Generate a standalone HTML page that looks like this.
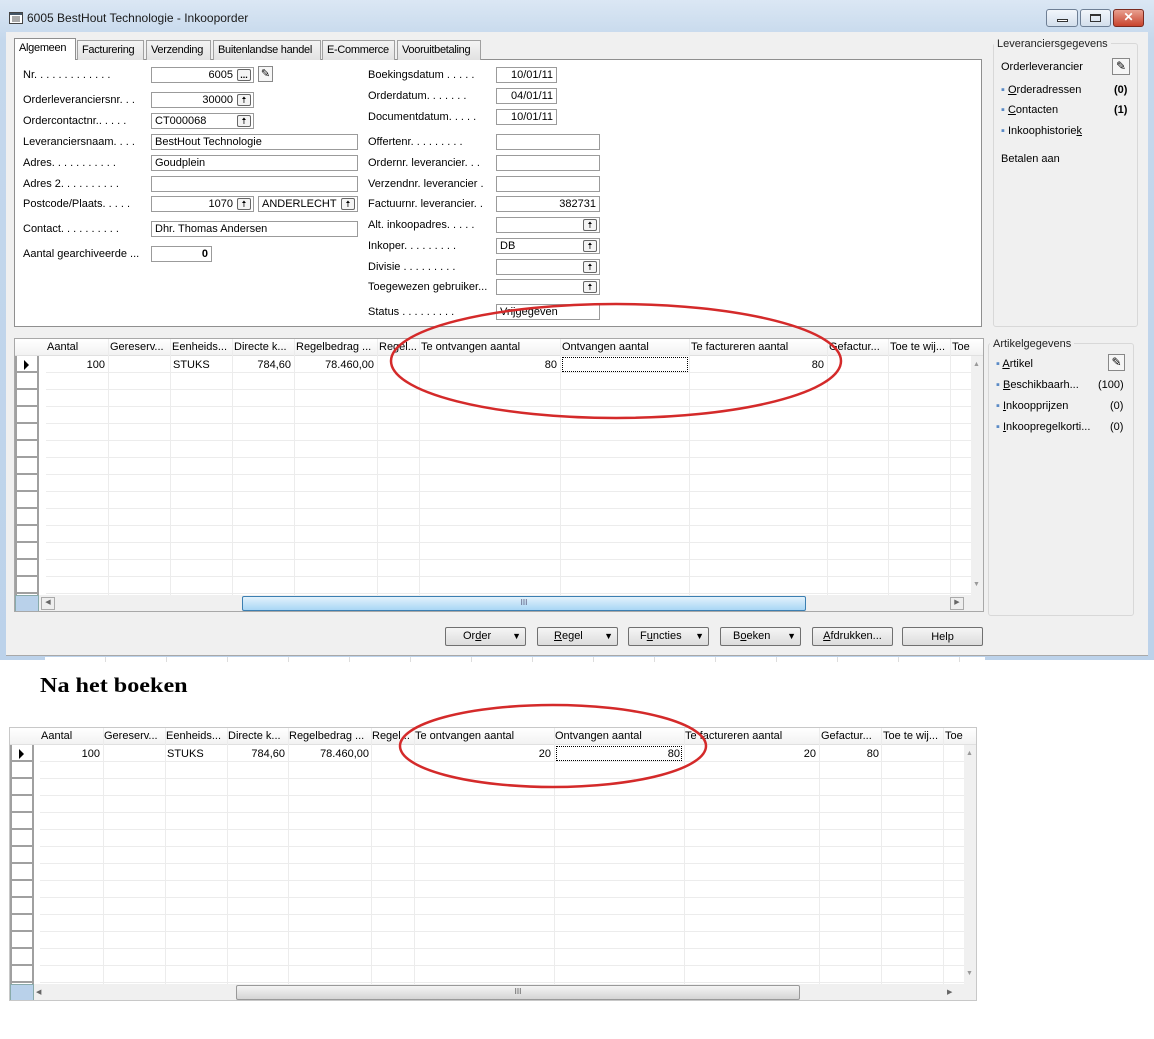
<!DOCTYPE html>
<html><head><meta charset="utf-8"><style>
*{box-sizing:border-box;margin:0;padding:0}
body{width:1154px;height:1039px;background:#fff;position:relative;overflow:hidden;font-family:"Liberation Sans",sans-serif;font-size:11px;color:#000}
.a{position:absolute}
.win{left:0;top:0;width:1154px;height:660px;background:linear-gradient(#dbe7f4,#c5d8ec 40px,#bcd2ea);}
.content{left:6px;top:32px;width:1142px;height:624px;background:#f0f0f0;border-bottom:1px solid #a8a8a8}
.title{left:27px;top:11px;font-size:12px;color:#1a1a1a}
.tb{top:9px;height:18px;border:1px solid #6e7f95;border-radius:3px;background:linear-gradient(#f2f6fb,#d3dfec)}
.panel{left:14px;top:59px;width:968px;height:268px;background:#fff;border:1px solid #8f8f8f}
.tab{top:40px;height:20px;border:1px solid #a0a0a0;border-bottom:none;background:linear-gradient(#f4f4f4,#e2e2e2);padding:3px 0 0 4px;font-size:11px;white-space:nowrap;overflow:hidden;letter-spacing:-0.3px}
.lbl{font-size:11px;white-space:nowrap}
.in{height:16px;border:1px solid #9b9b9b;background:#fff;padding:1px 3px;font-size:11px;white-space:nowrap;overflow:hidden}
.r{text-align:right}
.ab{position:absolute;top:1px;width:14px;height:12px;border:1px solid #666;border-radius:2px;background:#f4f4f4;font-size:9px;line-height:10px;text-align:center}
.grp{border:1px solid #d8d8d8;border-radius:3px}
.gl{background:#f0f0f0;padding:0 3px;font-size:11px;color:#222}
.btn{top:627px;height:19px;border:1px solid #707070;border-radius:2px;background:linear-gradient(#f5f5f5,#dcdcdc);font-size:11px;padding-top:2px}
.grid{border:1px solid #a8a8a8;background:#fff;overflow:hidden}
.hdr{left:0;top:0;right:0;height:17px;background:linear-gradient(#fff,#f2f2f2);border-bottom:1px solid #e0e0e0}
.hc{top:2px;font-size:11px;white-space:nowrap;overflow:hidden}
.vl{width:1px;background:#ececec}
.ind{background:repeating-linear-gradient(#fff 0 15px,#a0a0a0 15px 17px);border-right:2px solid #a0a0a0;border-left:2px solid #a0a0a0}
.rows{background:repeating-linear-gradient(#fff 0 16px,#ececec 16px 17px)}
.cell{font-size:11px;white-space:nowrap}
u{text-decoration:underline}
</style></head><body>

<div class="a win"></div>
<div class="a content"></div>
<svg class="a" style="left:9px;top:12px" width="14" height="12"><rect x=".5" y=".5" width="13" height="11" fill="#fff" stroke="#444"/><rect x="1" y="1" width="12" height="2" fill="#456"/><path d="M3 5h8M3 7h8M3 9h8" stroke="#555"/></svg>
<div class="a title">6005 BestHout Technologie - Inkooporder</div>
<div class="a tb" style="left:1046px;width:32px"><div class="a" style="left:10px;top:9px;width:11px;height:3px;border:1px solid #333;background:#fff"></div></div>
<div class="a tb" style="left:1080px;width:31px"><div class="a" style="left:9px;top:4px;width:11px;height:8px;border:1px solid #333;border-top-width:2px"></div></div>
<div class="a tb" style="left:1113px;width:31px;background:linear-gradient(#e8a090,#c8432d);border-color:#7a2a20;color:#fff;font-weight:bold;text-align:center;font-size:12px;line-height:15px">✕</div>

<!-- tabs -->
<div class="a panel"></div>
<div class="a tab" style="left:14px;width:62px;top:38px;height:22px;background:#fff;border-color:#8f8f8f">Algemeen</div>
<div class="a tab" style="left:77px;width:67px">Facturering</div>
<div class="a tab" style="left:146px;width:65px">Verzending</div>
<div class="a tab" style="left:213px;width:108px">Buitenlandse handel</div>
<div class="a tab" style="left:322px;width:73px">E-Commerce</div>
<div class="a tab" style="left:397px;width:84px">Vooruitbetaling</div>

<!-- left fields -->
<div class="a lbl" style="left:23px;top:69px">Nr. . . . . . . . . . . . .</div>
<div class="a in r" style="left:151px;top:67px;width:103px;padding-right:20px">6005<span class="ab" style="right:2px;font-weight:bold">...</span></div>
<div class="a" style="left:258px;top:66px;width:15px;height:16px;border:1px solid #888;background:#f6f6f6;font-size:11px;text-align:center">✎</div>
<div class="a lbl" style="left:23px;top:94px">Orderleveranciersnr. . .</div>
<div class="a in r" style="left:151px;top:92px;width:103px;padding-right:20px">30000<span class="ab" style="right:2px">🠅</span></div>
<div class="a lbl" style="left:23px;top:115px">Ordercontactnr.. . . . .</div>
<div class="a in" style="left:151px;top:113px;width:103px">CT000068<span class="ab" style="right:2px">🠅</span></div>
<div class="a lbl" style="left:23px;top:136px">Leveranciersnaam. . . .</div>
<div class="a in" style="left:151px;top:134px;width:207px">BestHout Technologie</div>
<div class="a lbl" style="left:23px;top:157px">Adres. . . . . . . . . . .</div>
<div class="a in" style="left:151px;top:155px;width:207px">Goudplein</div>
<div class="a lbl" style="left:23px;top:178px">Adres 2. . . . . . . . . .</div>
<div class="a in" style="left:151px;top:176px;width:207px"></div>
<div class="a lbl" style="left:23px;top:198px">Postcode/Plaats. . . . .</div>
<div class="a in r" style="left:151px;top:196px;width:103px;padding-right:20px">1070<span class="ab" style="right:2px">🠅</span></div>
<div class="a in" style="left:258px;top:196px;width:100px">ANDERLECHT<span class="ab" style="right:2px">🠅</span></div>
<div class="a lbl" style="left:23px;top:223px">Contact. . . . . . . . . .</div>
<div class="a in" style="left:151px;top:221px;width:207px">Dhr. Thomas Andersen</div>
<div class="a lbl" style="left:23px;top:248px">Aantal gearchiveerde ...</div>
<div class="a in r" style="left:151px;top:246px;width:61px;font-weight:bold">0</div>

<!-- right fields -->
<div class="a lbl" style="left:368px;top:69px">Boekingsdatum . . . . .</div>
<div class="a in r" style="left:496px;top:67px;width:61px">10/01/11</div>
<div class="a lbl" style="left:368px;top:90px">Orderdatum. . . . . . .</div>
<div class="a in r" style="left:496px;top:88px;width:61px">04/01/11</div>
<div class="a lbl" style="left:368px;top:111px">Documentdatum. . . . .</div>
<div class="a in r" style="left:496px;top:109px;width:61px">10/01/11</div>
<div class="a lbl" style="left:368px;top:136px">Offertenr. . . . . . . . .</div>
<div class="a in" style="left:496px;top:134px;width:104px"></div>
<div class="a lbl" style="left:368px;top:157px">Ordernr. leverancier. . .</div>
<div class="a in" style="left:496px;top:155px;width:104px"></div>
<div class="a lbl" style="left:368px;top:178px">Verzendnr. leverancier .</div>
<div class="a in" style="left:496px;top:176px;width:104px"></div>
<div class="a lbl" style="left:368px;top:198px">Factuurnr. leverancier. .</div>
<div class="a in r" style="left:496px;top:196px;width:104px">382731</div>
<div class="a lbl" style="left:368px;top:219px">Alt. inkoopadres. . . . .</div>
<div class="a in" style="left:496px;top:217px;width:104px"><span class="ab" style="right:2px">🠅</span></div>
<div class="a lbl" style="left:368px;top:240px">Inkoper. . . . . . . . .</div>
<div class="a in" style="left:496px;top:238px;width:104px">DB<span class="ab" style="right:2px">🠅</span></div>
<div class="a lbl" style="left:368px;top:261px">Divisie . . . . . . . . .</div>
<div class="a in" style="left:496px;top:259px;width:104px"><span class="ab" style="right:2px">🠅</span></div>
<div class="a lbl" style="left:368px;top:281px">Toegewezen gebruiker...</div>
<div class="a in" style="left:496px;top:279px;width:104px"><span class="ab" style="right:2px">🠅</span></div>
<div class="a lbl" style="left:368px;top:306px">Status . . . . . . . . .</div>
<div class="a in" style="left:496px;top:304px;width:104px">Vrijgegeven</div>

<!-- right side panels -->
<div class="a grp" style="left:993px;top:43px;width:145px;height:284px"></div>
<div class="a gl" style="left:994px;top:38px">Leveranciersgegevens</div>
<div class="a lbl" style="left:1001px;top:61px">Orderleverancier</div>
<div class="a" style="left:1112px;top:58px;width:18px;height:17px;border:1px solid #888;background:#f6f6f6;text-align:center;font-size:12px">✎</div>
<div class="a lbl" style="left:1001px;top:84px"><span style="color:#5a8ac6">▪</span> <u>O</u>rderadressen</div><div class="a lbl" style="left:1114px;top:84px;font-weight:bold">(0)</div>
<div class="a lbl" style="left:1001px;top:104px"><span style="color:#5a8ac6">▪</span> <u>C</u>ontacten</div><div class="a lbl" style="left:1114px;top:104px;font-weight:bold">(1)</div>
<div class="a lbl" style="left:1001px;top:125px"><span style="color:#5a8ac6">▪</span> Inkoophistorie<u>k</u></div>
<div class="a lbl" style="left:1001px;top:153px">Betalen aan</div>

<div class="a grp" style="left:988px;top:343px;width:146px;height:273px"></div>
<div class="a gl" style="left:990px;top:338px">Artikelgegevens</div>
<div class="a lbl" style="left:996px;top:358px"><span style="color:#5a8ac6">▪</span> <u>A</u>rtikel</div>
<div class="a" style="left:1108px;top:354px;width:17px;height:17px;border:1px solid #888;background:#f6f6f6;text-align:center;font-size:12px">✎</div>
<div class="a lbl" style="left:996px;top:379px"><span style="color:#5a8ac6">▪</span> <u>B</u>eschikbaarh...</div><div class="a lbl" style="left:1098px;top:379px">(100)</div>
<div class="a lbl" style="left:996px;top:400px"><span style="color:#5a8ac6">▪</span> <u>I</u>nkoopprijzen</div><div class="a lbl" style="left:1110px;top:400px">(0)</div>
<div class="a lbl" style="left:996px;top:421px"><span style="color:#5a8ac6">▪</span> <u>I</u>nkoopregelkorti...</div><div class="a lbl" style="left:1110px;top:421px">(0)</div>

<!-- GRID 1 -->
<div class="a grid" style="left:14px;top:338px;width:970px;height:274px">
 <div class="a hdr"></div>
 <div class="a ind" style="left:0;top:17px;width:24px;height:239px"></div>
 <div class="a rows" style="left:31px;top:17px;width:925px;height:239px"></div>
 <div class="a vl" style="left:93px;top:0;height:256px"></div>
 <div class="a vl" style="left:155px;top:0;height:256px"></div>
 <div class="a vl" style="left:217px;top:0;height:256px"></div>
 <div class="a vl" style="left:279px;top:0;height:256px"></div>
 <div class="a vl" style="left:362px;top:0;height:256px"></div>
 <div class="a vl" style="left:404px;top:0;height:256px"></div>
 <div class="a vl" style="left:545px;top:0;height:256px"></div>
 <div class="a vl" style="left:674px;top:0;height:256px"></div>
 <div class="a vl" style="left:812px;top:0;height:256px"></div>
 <div class="a vl" style="left:873px;top:0;height:256px"></div>
 <div class="a vl" style="left:935px;top:0;height:256px"></div>
 <div class="a hc" style="left:32px">Aantal</div>
 <div class="a hc" style="left:95px;width:59px">Gereserv...</div>
 <div class="a hc" style="left:157px;width:59px">Eenheids...</div>
 <div class="a hc" style="left:219px;width:59px">Directe k...</div>
 <div class="a hc" style="left:281px;width:80px">Regelbedrag ...</div>
 <div class="a hc" style="left:364px;width:40px">Regel...</div>
 <div class="a hc" style="left:406px">Te ontvangen aantal</div>
 <div class="a hc" style="left:547px">Ontvangen aantal</div>
 <div class="a hc" style="left:676px">Te factureren aantal</div>
 <div class="a hc" style="left:814px;width:58px">Gefactur...</div>
 <div class="a hc" style="left:875px;width:59px">Toe te wij...</div>
 <div class="a hc" style="left:937px;width:18px">Toe</div>
 <div class="a" style="left:9px;top:21px;width:0;height:0;border-left:5px solid #000;border-top:5px solid transparent;border-bottom:5px solid transparent"></div>
 <div class="a cell r" style="left:31px;top:20px;width:59px">100</div>
 <div class="a cell" style="left:158px;top:20px">STUKS</div>
 <div class="a cell r" style="left:217px;top:20px;width:59px">784,60</div>
 <div class="a cell r" style="left:279px;top:20px;width:80px">78.460,00</div>
 <div class="a cell r" style="left:404px;top:20px;width:138px">80</div>
 <div class="a" style="left:547px;top:18px;width:126px;height:15px;border:1px dotted #000"></div>
 <div class="a cell r" style="left:674px;top:20px;width:135px">80</div>
 <div class="a" style="left:956px;top:17px;width:13px;height:239px;background:#f0f0f0"></div>
 <div class="a" style="left:958px;top:22px;font-size:7px;color:#999">▲</div>
 <div class="a" style="left:958px;top:242px;font-size:7px;color:#999">▼</div>
 <div class="a" style="left:0;top:256px;width:24px;height:17px;background:#b9d1ea;border:1px solid #8aa"></div>
 <div class="a" style="left:24px;top:256px;width:946px;height:17px;background:#f0f0f0"></div>
 <div class="a" style="left:26px;top:258px;width:14px;height:13px;border:1px solid #aaa;background:#eee;font-size:7px;color:#666;text-align:center">◀</div>
 <div class="a" style="left:227px;top:257px;width:564px;height:15px;border:1px solid #3c7fb1;border-radius:2px;background:linear-gradient(#e3f2fc,#a9d6f5);text-align:center;font-size:8px;color:#557;line-height:12px">III</div>
 <div class="a" style="left:935px;top:258px;width:14px;height:13px;border:1px solid #aaa;background:#eee;font-size:7px;color:#666;text-align:center">▶</div>
</div>

<!-- buttons -->
<div class="a btn" style="left:445px;width:81px;padding-left:17px">Or<u>d</u>er<span class="a" style="right:4px;top:3px;font-size:9px">▼</span></div>
<div class="a btn" style="left:537px;width:81px;padding-left:16px"><u>R</u>egel<span class="a" style="right:4px;top:3px;font-size:9px">▼</span></div>
<div class="a btn" style="left:628px;width:81px;padding-left:11px">F<u>u</u>ncties<span class="a" style="right:4px;top:3px;font-size:9px">▼</span></div>
<div class="a btn" style="left:720px;width:81px;padding-left:12px">B<u>o</u>eken<span class="a" style="right:4px;top:3px;font-size:9px">▼</span></div>
<div class="a btn" style="left:812px;width:81px;text-align:center"><u>A</u>fdrukken...</div>
<div class="a btn" style="left:902px;width:81px;text-align:center;padding-top:3px">Help</div>

<!-- remnants -->
<div class="a" style="left:45px;top:657px;width:940px;height:5px;background:repeating-linear-gradient(90deg,#fff 0 60px,#ddd 60px 61px)"></div>

<div class="a" style="left:40px;top:673px;font-family:'Liberation Serif',serif;font-weight:bold;font-size:21px;transform:scaleX(1.15);transform-origin:left top;white-space:nowrap">Na het boeken</div>

<!-- GRID 2 -->
<div class="a grid" style="left:9px;top:727px;width:968px;height:274px;border-color:#c8c8c8">
 <div class="a hdr"></div>
 <div class="a ind" style="left:0;top:17px;width:24px;height:239px"></div>
 <div class="a rows" style="left:30px;top:17px;width:925px;height:239px"></div>
 <div class="a vl" style="left:93px;top:0;height:256px"></div>
 <div class="a vl" style="left:155px;top:0;height:256px"></div>
 <div class="a vl" style="left:217px;top:0;height:256px"></div>
 <div class="a vl" style="left:278px;top:0;height:256px"></div>
 <div class="a vl" style="left:361px;top:0;height:256px"></div>
 <div class="a vl" style="left:404px;top:0;height:256px"></div>
 <div class="a vl" style="left:544px;top:0;height:256px"></div>
 <div class="a vl" style="left:674px;top:0;height:256px"></div>
 <div class="a vl" style="left:809px;top:0;height:256px"></div>
 <div class="a vl" style="left:871px;top:0;height:256px"></div>
 <div class="a vl" style="left:933px;top:0;height:256px"></div>
 <div class="a hc" style="left:31px">Aantal</div>
 <div class="a hc" style="left:94px;width:60px">Gereserv...</div>
 <div class="a hc" style="left:156px;width:60px">Eenheids...</div>
 <div class="a hc" style="left:218px;width:59px">Directe k...</div>
 <div class="a hc" style="left:279px;width:81px">Regelbedrag ...</div>
 <div class="a hc" style="left:362px;width:42px">Regel...</div>
 <div class="a hc" style="left:405px">Te ontvangen aantal</div>
 <div class="a hc" style="left:545px">Ontvangen aantal</div>
 <div class="a hc" style="left:675px">Te factureren aantal</div>
 <div class="a hc" style="left:811px;width:59px">Gefactur...</div>
 <div class="a hc" style="left:873px;width:59px">Toe te wij...</div>
 <div class="a hc" style="left:935px;width:18px">Toe</div>
 <div class="a" style="left:9px;top:21px;width:0;height:0;border-left:5px solid #000;border-top:5px solid transparent;border-bottom:5px solid transparent"></div>
 <div class="a cell r" style="left:30px;top:20px;width:60px">100</div>
 <div class="a cell" style="left:157px;top:20px">STUKS</div>
 <div class="a cell r" style="left:217px;top:20px;width:58px">784,60</div>
 <div class="a cell r" style="left:278px;top:20px;width:81px">78.460,00</div>
 <div class="a cell r" style="left:404px;top:20px;width:137px">20</div>
 <div class="a" style="left:546px;top:18px;width:126px;height:15px;border:1px dotted #000"></div>
 <div class="a cell r" style="left:546px;top:20px;width:124px">80</div>
 <div class="a cell r" style="left:674px;top:20px;width:132px">20</div>
 <div class="a cell r" style="left:809px;top:20px;width:60px">80</div>
 <div class="a" style="left:954px;top:17px;width:13px;height:239px;background:#f0f0f0"></div>
 <div class="a" style="left:956px;top:22px;font-size:7px;color:#999">▲</div>
 <div class="a" style="left:956px;top:242px;font-size:7px;color:#999">▼</div>
 <div class="a" style="left:0;top:256px;width:24px;height:17px;background:#b9d1ea;border:1px solid #8aa"></div>
 <div class="a" style="left:24px;top:256px;width:944px;height:17px;background:#f0f0f0"></div>
 <div class="a" style="left:26px;top:260px;font-size:7px;color:#666">◀</div>
 <div class="a" style="left:226px;top:257px;width:564px;height:15px;border:1px solid #999;border-radius:2px;background:linear-gradient(#f4f4f4,#d4d4d4);text-align:center;font-size:8px;color:#555;line-height:12px">III</div>
 <div class="a" style="left:937px;top:260px;font-size:7px;color:#666">▶</div>
</div>

<!-- red ellipses -->
<svg class="a" style="left:0;top:0" width="1154" height="1039">
 <ellipse cx="616" cy="361" rx="225" ry="57" fill="none" stroke="#d42a2a" stroke-width="2.5"/>
 <ellipse cx="553" cy="746" rx="153" ry="41" fill="none" stroke="#d42a2a" stroke-width="2.5"/>
</svg>
</body></html>
